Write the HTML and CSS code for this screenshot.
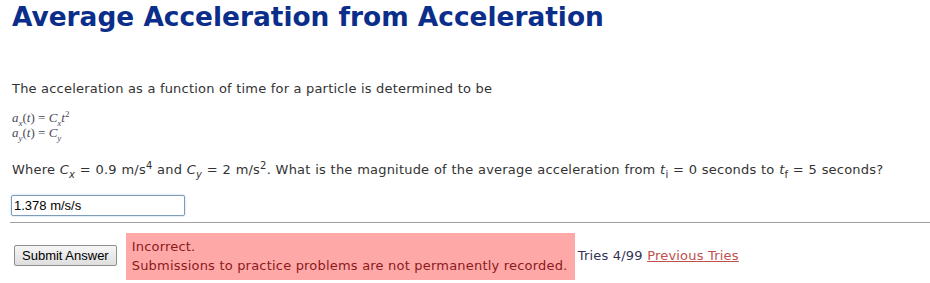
FILE: index.html
```html
<!DOCTYPE html>
<html>
<head>
<meta charset="utf-8">
<link rel="stylesheet" href="styles.css">
</head>
<body>
<div class="page">
  <h1 class="title">Average Acceleration from Acceleration</h1>
  <p class="intro">The acceleration as a function of time for a particle is determined to be</p>
  <div class="math">
    <div><i>a<sub>x</sub></i>(<i>t</i>) = <i>C<sub>x</sub>t</i><sup>2</sup></div>
    <div><i>a<sub>y</sub></i>(<i>t</i>) = <i>C<sub>y</sub></i></div>
  </div>
  <p class="question">Where <i>C<sub>x</sub></i> = 0.9 m/s<sup>4</sup> and <i>C<sub>y</sub></i> = 2 m/s<sup>2</sup>. What is the magnitude of the average acceleration from <i>t</i><sub>i</sub> = 0 seconds to <i>t</i><sub>f</sub> = 5 seconds?</p>
  <div class="answer-row"><input class="answer" type="text" value="1.378 m/s/s"></div>
  <hr class="rule">
  <div class="submit-row">
    <button class="submit">Submit Answer</button>
    <div class="feedback">Incorrect.<br>Submissions to practice problems are not permanently recorded.</div>
    <div class="tries">Tries 4/99 <a href="#" class="prev">Previous Tries</a></div>
  </div>
</div>
</body>
</html>
```

FILE: styles.css
```css
html, body { margin: 0; padding: 0; background: #fff; }
body { font-family: "DejaVu Sans", Verdana, sans-serif; font-size: 13px; color: #333; letter-spacing: 0.2px; }
.page { padding: 0 0 0 10px; }
.title {
  margin: 0;
  padding-top: 1px;
  padding-left: 2px;
  font-family: "DejaVu Sans", Tahoma, sans-serif;
  font-weight: bold;
  font-size: 26.4px;
  line-height: 32px;
  letter-spacing: 0;
  color: #0b2e8a;
}
.intro { margin: 48px 0 0 2px; line-height: 16px; }
.math {
  margin: 13px 0 0 2px;
  font-family: "Liberation Serif", "Times New Roman", serif;
  font-size: 13px;
  line-height: 15px;
  letter-spacing: 0;
  color: #4a4a5a;
}
.math sub, .math sup { font-size: 9px; line-height: 0; }
.question { margin: 22px 0 0 2px; line-height: 16px; word-spacing: 0.3px; }
.question sub, .question sup { font-size: 10px; line-height: 0; }
.answer-row { margin-top: 17px; }
.answer {
  box-sizing: border-box;
  width: 174px;
  height: 21px;
  margin: 0 0 0 1px;
  padding: 0 2px;
  border: 1px solid #7f9db9;
  border-radius: 2px;
  font-family: "Liberation Sans", Arial, sans-serif;
  font-size: 13px;
  letter-spacing: 0;
  color: #000;
  box-shadow: 0 0 2px #9ec3ea;
}
.rule { margin: 6px 0 0 0; border: 0; border-top: 1px solid #a0a0a0; height: 0; }
.submit-row { display: flex; align-items: flex-start; margin-top: 10px; }
.submit {
  margin: 12px 0 0 4px;
  height: 21px;
  padding: 0 7px;
  font-family: "Liberation Sans", Arial, sans-serif;
  font-size: 13px;
  letter-spacing: 0;
  color: #000;
  background: linear-gradient(#f6f6f6, #dedede);
  border: 1px solid #8e8e8e;
  border-radius: 2px;
}
.feedback {
  margin-left: 9px;
  background: #ffa8a8;
  color: #8b1a1a;
  padding: 4px 6px 5px 6px;
  line-height: 19px;
  width: 437px;
  white-space: nowrap;
}
.tries { margin: 15px 0 0 3px; color: #333355; }
.prev { color: #c0504d; }
```
